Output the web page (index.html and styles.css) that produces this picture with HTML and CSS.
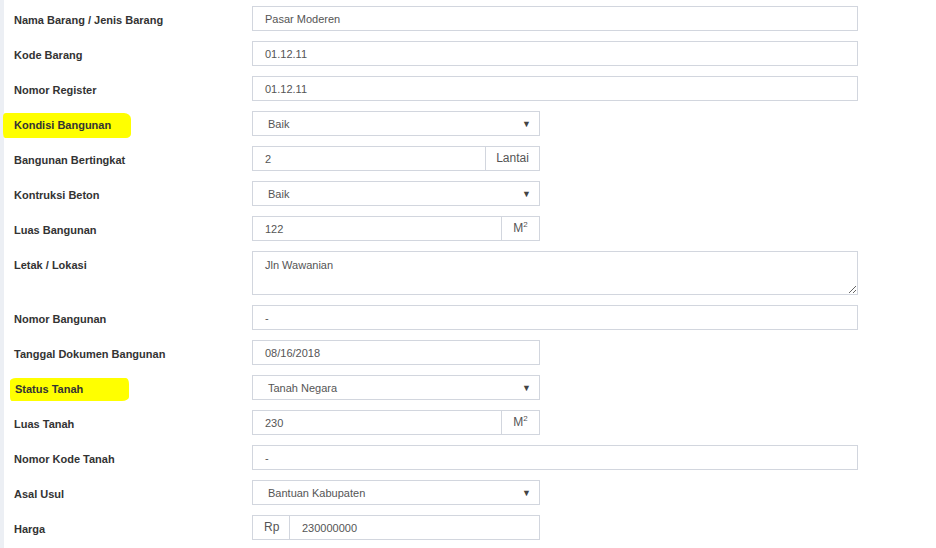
FILE: index.html
```html
<!DOCTYPE html>
<html>
<head>
<meta charset="utf-8">
<link rel="stylesheet" href="styles.css">
</head>
<body>
<div class="page">
  <div class="strip"></div>
  <div class="form">
    <div class="row"><div class="label"><span>Nama Barang / Jenis Barang</span></div><div class="field full">Pasar Moderen</div></div>
    <div class="row"><div class="label"><span>Kode Barang</span></div><div class="field full">01.12.11</div></div>
    <div class="row"><div class="label"><span>Nomor Register</span></div><div class="field full">01.12.11</div></div>
    <div class="row"><div class="label"><span class="hl hl-a">Kondisi Bangunan</span></div><div class="field half select"><span>Baik</span><span class="arrow">&#9660;</span></div></div>
    <div class="row"><div class="label"><span>Bangunan Bertingkat</span></div><div class="group half"><div class="gin">2</div><div class="addon lantai">Lantai</div></div></div>
    <div class="row"><div class="label"><span>Kontruksi Beton</span></div><div class="field half select"><span>Baik</span><span class="arrow">&#9660;</span></div></div>
    <div class="row"><div class="label"><span>Luas Bangunan</span></div><div class="group half"><div class="gin">122</div><div class="addon m2">M<sup>2</sup></div></div></div>
    <div class="row"><div class="label"><span>Letak / Lokasi</span></div><textarea class="area full">Jln Wawanian</textarea></div>
    <div class="row"><div class="label"><span>Nomor Bangunan</span></div><div class="field full">-</div></div>
    <div class="row"><div class="label"><span>Tanggal Dokumen Bangunan</span></div><div class="field half">08/16/2018</div></div>
    <div class="row"><div class="label"><span class="hl hl-b">Status Tanah</span></div><div class="field half select"><span>Tanah Negara</span><span class="arrow">&#9660;</span></div></div>
    <div class="row"><div class="label"><span>Luas Tanah</span></div><div class="group half"><div class="gin">230</div><div class="addon m2">M<sup>2</sup></div></div></div>
    <div class="row"><div class="label"><span>Nomor Kode Tanah</span></div><div class="field full">-</div></div>
    <div class="row"><div class="label"><span>Asal Usul</span></div><div class="field half select"><span>Bantuan Kabupaten</span><span class="arrow">&#9660;</span></div></div>
    <div class="row"><div class="label"><span>Harga</span></div><div class="group half"><div class="addon rp">Rp</div><div class="gin">230000000</div></div></div>
  </div>
</div>
</body>
</html>
```
FILE: styles.css
```css
html, body {
  margin: 0;
  padding: 0;
  background: #fff;
  font-family: "Liberation Sans", Arial, sans-serif;
  font-size: 11px;
  color: #333;
  overflow: hidden;
}
.page {
  display: flex;
  height: 548px;
}
.strip {
  width: 4px;
  background: #eceff4;
  flex: none;
}
.form {
  padding: 6px 0 0 10px;
  display: flex;
  flex-direction: column;
  gap: 10px;
}
.row {
  display: flex;
  align-items: flex-start;
}
.label {
  width: 238px;
  height: 25px;
  box-sizing: border-box;
  flex: none;
  padding-top: 6px;
  line-height: 16px;
  font-size: 11px;
  font-weight: bold;
  color: #333;
}
.hl {
  background: #ffff00;
  display: inline-block;
}
.hl-a {
  padding: 4px 20px 5px 11px;
  margin: -4px 0 0 -11px;
  border-radius: 3px 7px 5px 2px / 4px 6px 4px 6px;
}
.hl-b {
  padding: 3px 46px 4px 5px;
  margin: -3px 0 0 -4px;
  border-radius: 6px 3px 7px 2px / 3px 6px 4px 5px;
}
.field, .group, .area {
  box-sizing: border-box;
  border: 1px solid #d2d6de;
  background: #fff;
  color: #555;
  font-family: "Liberation Sans", Arial, sans-serif;
  font-size: 11px;
}
.field {
  height: 25px;
  line-height: 22px;
  padding: 1px 12px 0;
}
.full { width: 606px; }
.half { width: 288px; }
.select {
  display: flex;
  justify-content: space-between;
  padding: 1px 8px 0 15px;
}
.arrow {
  font-size: 9px;
  color: #444;
}
.group {
  height: 25px;
  display: flex;
}
.gin {
  flex: 1;
  line-height: 22px;
  padding: 1px 12px 0;
}
.addon {
  flex: none;
  box-sizing: border-box;
  line-height: 22px;
  font-size: 12px;
  text-align: center;
  color: #555;
}
.lantai { width: 54px; border-left: 1px solid #d2d6de; }
.m2 { width: 38px; border-left: 1px solid #d2d6de; }
.rp { width: 37px; border-right: 1px solid #d2d6de; text-align: left; padding-left: 11px; }
.m2 sup {
  font-size: 8px;
  line-height: 0;
  vertical-align: 5px;
}
.area {
  height: 44px;
  padding: 7px 12px 0;
  resize: both;
  outline: none;
  display: block;
  margin: 0;
}
```
